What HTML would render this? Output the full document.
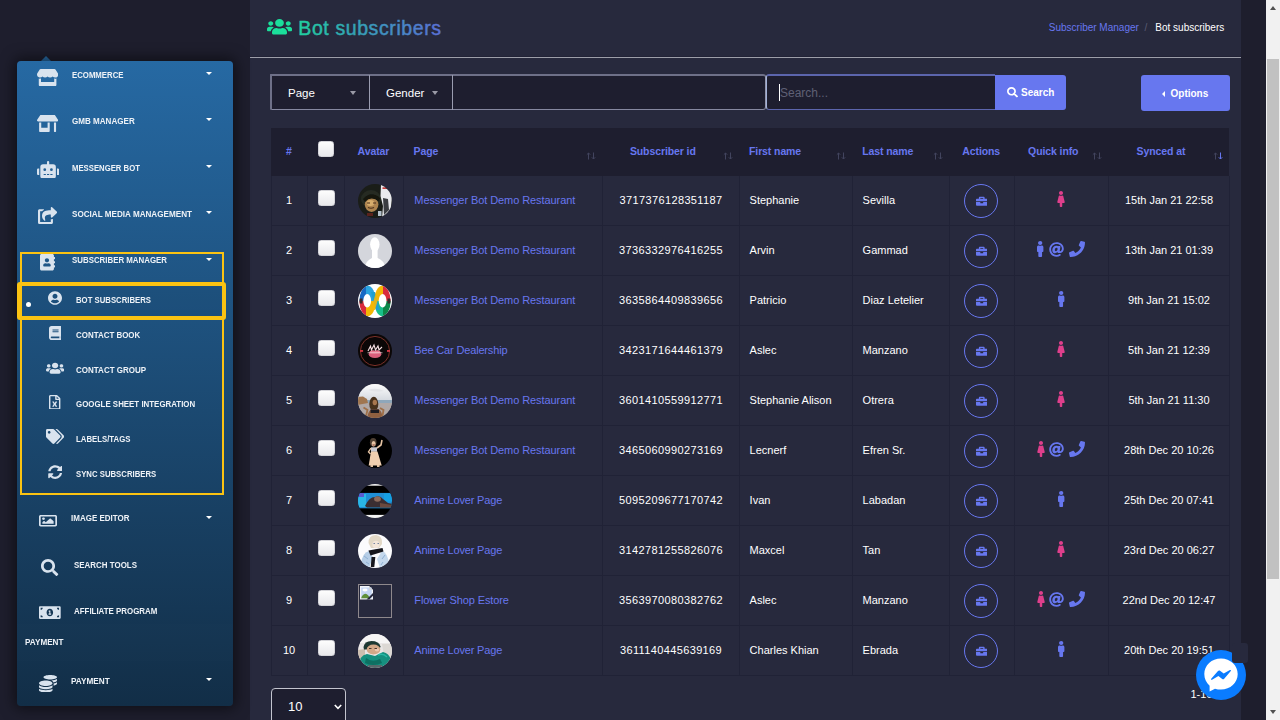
<!DOCTYPE html>
<html lang="en">
<head>
<meta charset="utf-8">
<title>Bot subscribers</title>
<style>
*{box-sizing:border-box;margin:0;padding:0}
html,body{width:1280px;height:720px;overflow:hidden;background:#1e1e2d;font-family:"Liberation Sans",sans-serif;color:#fff}
body{position:relative}
#main{position:absolute;left:250px;top:0;width:991px;height:720px;background:#27293d}
#hdrline{position:absolute;left:250px;top:56px;width:991px;height:2px;background:linear-gradient(180deg,#212236 0,#212236 50%,#9d9ea9 50%,#9d9ea9 100%)}
.crumb{position:absolute;top:21px;font-size:10px;line-height:14px;white-space:nowrap;color:#fff}
/* browser scrollbar */
#sb{position:absolute;left:1266px;top:0;width:14px;height:720px;background:#f1f1f1}
#sb .thumb{position:absolute;left:1.300px;top:59.200px;width:11.500px;height:520px;background:#c1c1c1}
#sb .up,#sb .dn{position:absolute;left:4px;width:0;height:0;border-left:3.5px solid transparent;border-right:3.5px solid transparent}
#sb .up{top:6px;border-bottom:4px solid #505050}
#sb .dn{top:710px;border-top:4px solid #505050}
/* sidebar */
#side{position:absolute;left:17px;top:61px;width:216px;height:645px;border-radius:4px;background:linear-gradient(180deg,#2669a3 0%,#122e47 100%);box-shadow:0 0 14px 3px rgba(0,0,0,.5)}
#sidetri{position:absolute;left:41px;top:56px;border-left:5px solid transparent;border-right:5px solid transparent;border-bottom:5px solid #2669a3}
.mt{position:absolute;font-size:8.7px;line-height:12px;height:12px;font-weight:700;color:#eef2f7;white-space:nowrap;transform-origin:0 50%}
.car{position:absolute;width:0;height:0;border-left:3.700px solid transparent;border-right:3.700px solid transparent;border-top:3.800px solid #fff}
.yb{position:absolute;border-style:solid;border-color:#fbc312}
/* filter bar */
.ftxt{position:absolute;font-size:11.5px;line-height:16px;color:#fff;white-space:nowrap}
.fcar{position:absolute;width:0;height:0;border-left:3px solid transparent;border-right:3px solid transparent;border-top:4px solid #9a9aa6}
.btn{position:absolute;background:#6777ef;color:#fff;font-weight:700;font-size:10px;white-space:nowrap}
/* table */
#thead{position:absolute;left:271px;top:128px;width:958px;height:48px;background:#1e1e2f}
.th{position:absolute;top:144px;height:14px;line-height:14px;font-size:10.5px;letter-spacing:-.1px;font-weight:700;color:#6777ef;white-space:nowrap}
.vl{position:absolute;top:176px;width:1px;height:500px;background:#202236}
.hl{position:absolute;left:271px;width:958px;height:1px;background:#202236}
.td{position:absolute;height:14px;line-height:14px;font-size:11px;color:#fff;white-space:nowrap}
.lnk{color:#6777ef}
.ctr{text-align:center}
.cb{position:absolute;left:318px;width:16.600px;height:16.600px;border-radius:2.800px;background:linear-gradient(180deg,#fdfdfd,#e9e9ec);border:1px solid #d5d5da}
.av{position:absolute;left:358px;width:34px;height:34px;border-radius:50%;overflow:hidden}
.ab{position:absolute;left:964px;width:34px;height:34px;border-radius:50%;border:1px solid #6777ef}
</style>
</head>
<body>
<div id="main"></div>
<div id="hdrline"></div>
<svg style="position:absolute;left:266.7px;top:18.3px" width="25" height="17.7" viewBox="0 0 640 512" preserveAspectRatio="none" fill="#1bdf9b"><path d="M96 224c35.300 0 64-28.700 64-64s-28.700-64-64-64-64 28.700-64 64 28.700 64 64 64zm448 0c35.300 0 64-28.700 64-64s-28.700-64-64-64-64 28.700-64 64 28.700 64 64 64zm32 32h-64c-17.600 0-33.500 7.100-45.100 18.600 40.300 22.100 68.900 62 75.100 109.400h66c17.700 0 32-14.300 32-32v-32c0-35.300-28.700-64-64-64zm-256 0c61.900 0 112-50.100 112-112S381.900 32 320 32 208 82.100 208 144s50.100 112 112 112zm76.800 32h-8.300c-20.800 10-43.900 16-68.500 16s-47.600-6-68.500-16h-8.300C179.600 288 128 339.600 128 403.200V432c0 26.500 21.500 48 48 48h288c26.500 0 48-21.500 48-48v-28.800c0-63.600-51.600-115.200-115.200-115.200zm-223.700-13.400C161.500 263.100 145.600 256 128 256H64c-35.300 0-64 28.700-64 64v32c0 17.700 14.300 32 32 32h65.900c6.300-47.400 34.900-87.300 75.200-109.400z"/></svg><svg style="position:absolute;left:290px;top:10px" width="170" height="36" viewBox="0 0 170 36"><defs><linearGradient id="tg" gradientUnits="userSpaceOnUse" x1="8" y1="0" x2="151" y2="0"><stop offset="0" stop-color="#20cf9f"/><stop offset=".38" stop-color="#33a3b5"/><stop offset="1" stop-color="#5a6fd6"/></linearGradient></defs><text x="8.300" y="24.700" font-family="Liberation Sans, sans-serif" font-size="19.500" letter-spacing=".6" fill="url(#tg)" stroke="url(#tg)" stroke-width=".45">Bot subscribers</text></svg>
<div class="crumb" style="left:1048.800px;color:#6777ef">Subscriber Manager</div><div class="crumb" style="left:1144.500px;color:#5a5c74">/</div><div class="crumb" style="left:1155.300px">Bot subscribers</div>
<div id="sidetri"></div><div id="side"></div>
<div style="position:absolute;left:17px;top:624px;width:216px;height:37px;background:rgba(255,255,255,.008)"></div>
<div style="position:absolute;left:21px;top:286px;width:200px;height:30px;background:rgba(0,0,0,.04)"></div>
<div class="mt" style="left:71.5px;top:69.0px;transform:scaleX(0.8965)">ECOMMERCE</div><svg style="position:absolute;left:37.2px;top:68.6px" width="21.2" height="17.2" viewBox="0 0 616 512" preserveAspectRatio="none" fill="#d9e3ee"><path d="M602 118.600L537.100 15C531.300 5.700 521 0 510 0H106C95 0 84.700 5.700 78.900 15L14 118.600c-33.500 53.500-3.800 127.900 58.800 136.400 4.500.6 9.100.9 13.700.9 29.600 0 55.800-13 73.800-33.100 18 20.100 44.300 33.100 73.800 33.100 29.600 0 55.800-13 73.800-33.100 18 20.100 44.300 33.100 73.800 33.100 29.600 0 55.800-13 73.800-33.100 18.100 20.100 44.300 33.100 73.800 33.100 4.700 0 9.200-.3 13.700-.9 62.800-8.400 92.600-82.800 59-136.400zM529.500 288c-10 0-19.900-1.500-29.500-3.800V384H116v-99.800c-9.600 2.200-19.500 3.800-29.500 3.800-6 0-12.100-.4-18-1.200-5.600-.8-11.100-2.100-16.400-3.600V480c0 17.700 14.300 32 32 32h448c17.700 0 32-14.300 32-32V283.200c-5.400 1.600-10.800 2.900-16.400 3.600-6.100.8-12.100 1.200-18.200 1.200z"/></svg><div class="car" style="left:205.600px;top:72.4px"></div>
<div class="mt" style="left:71.5px;top:115.0px;transform:scaleX(0.9281)">GMB MANAGER</div><svg style="position:absolute;left:37.2px;top:114.8px" width="21.2" height="17" viewBox="0 0 640 512" preserveAspectRatio="none" fill="#d9e3ee"><path d="M320 384H128V224H64v256c0 17.700 14.300 32 32 32h256c17.700 0 32-14.300 32-32V224h-64v160zm314.600-241.800l-85.300-128c-6-8.900-16-14.200-26.700-14.200H117.400c-10.700 0-20.700 5.300-26.600 14.200l-85.300 128c-14.200 21.300 1 49.800 26.600 49.800H608c25.500 0 40.700-28.500 26.600-49.800zM512 496c0 8.800 7.200 16 16 16h32c8.800 0 16-7.200 16-16V224h-64v272z"/></svg><div class="car" style="left:205.600px;top:118.4px"></div>
<div class="mt" style="left:71.5px;top:161.5px;transform:scaleX(0.8908)">MESSENGER BOT</div><svg style="position:absolute;left:36.7px;top:160.8px" width="22.2" height="17.3" viewBox="0 0 640 512" preserveAspectRatio="none" fill="#d9e3ee"><path d="M32,224H64V416H32A31.962,31.962,0,0,1,0,384V256A31.962,31.962,0,0,1,32,224Zm512-48V448a64.063,64.063,0,0,1-64,64H160a64.063,64.063,0,0,1-64-64V176a79.974,79.974,0,0,1,80-80H288V32a32,32,0,0,1,64,0V96H464A79.974,79.974,0,0,1,544,176ZM264,256a40,40,0,1,0-40,40A39.997,39.997,0,0,0,264,256Zm-8,128H192v32h64Zm96,0H288v32h64ZM456,256a40,40,0,1,0-40,40A39.997,39.997,0,0,0,456,256Zm-8,128H384v32h64ZM640,256V384a31.962,31.962,0,0,1-32,32H576V224h32A31.962,31.962,0,0,1,640,256Z"/></svg><div class="car" style="left:205.600px;top:164.9px"></div>
<div class="mt" style="left:71.5px;top:207.5px;transform:scaleX(0.9343)">SOCIAL MEDIA MANAGEMENT</div><svg style="position:absolute;left:37.8px;top:207.1px" width="19.2" height="17" viewBox="0 0 576 512" preserveAspectRatio="none" fill="#d9e3ee"><path d="M568.482 177.448L424.479 313.433C409.300 327.768 384 317.140 384 295.985v-71.963c-144.575.97-205.566 35.113-164.775 171.353 4.483 14.973-12.846 26.567-25.006 17.330C155.252 383.105 120 326.488 120 269.339c0-143.937 117.599-172.500 264-173.312V24.012c0-21.174 25.317-31.768 40.479-17.448l144.003 135.988c10.020 9.463 10.028 25.425 0 34.896zM384 379.128V448H64V128h50.916a11.990 11.990 0 0 0 8.648-3.693c14.953-15.568 32.237-27.890 51.014-37.676C185.708 80.830 181.584 64 169.033 64H48C21.490 64 0 85.490 0 112v352c0 26.510 21.490 48 48 48h352c26.510 0 48-21.490 48-48v-88.806c0-8.288-8.197-14.066-16.011-11.302a71.830 71.830 0 0 1-34.189 3.377c-7.270-1.046-13.800 4.514-13.800 11.859z"/></svg><div class="car" style="left:205.600px;top:210.9px"></div>
<div class="mt" style="left:71.6px;top:254.4px;transform:scaleX(0.9067)">SUBSCRIBER MANAGER</div><svg style="position:absolute;left:39.8px;top:254.4px" width="15" height="16.5" viewBox="0 0 448 512" preserveAspectRatio="none" fill="#d9e3ee"><path d="M436 160c6.600 0 12-5.400 12-12v-40c0-6.600-5.400-12-12-12h-20V48c0-26.500-21.500-48-48-48H48C21.500 0 0 21.500 0 48v416c0 26.500 21.500 48 48 48h320c26.500 0 48-21.500 48-48v-48h20c6.600 0 12-5.400 12-12v-40c0-6.600-5.400-12-12-12h-20v-64h20c6.600 0 12-5.400 12-12v-40c0-6.600-5.400-12-12-12h-20v-64h20zm-228-32c35.300 0 64 28.700 64 64s-28.700 64-64 64-64-28.700-64-64 28.700-64 64-64zm112 236.800c0 10.600-10 19.200-22.400 19.200H118.400C106 384 96 375.400 96 364.800v-19.200c0-31.800 30.100-57.600 67.200-57.600h5c12.300 5.100 25.700 8 39.800 8s27.600-2.900 39.800-8h5c37.100 0 67.200 25.800 67.200 57.600v19.200z"/></svg><div class="car" style="left:205.600px;top:257.8px"></div>
<div class="mt" style="left:75.9px;top:294.0px;transform:scaleX(0.8929)">BOT SUBSCRIBERS</div><svg style="position:absolute;left:48.1px;top:291.2px" width="14" height="14" viewBox="0 0 496 512" preserveAspectRatio="none" fill="#d9e3ee"><path d="M248 8C111 8 0 119 0 256s111 248 248 248 248-111 248-248S385 8 248 8zm0 96c48.600 0 88 39.400 88 88s-39.400 88-88 88-88-39.400-88-88 39.400-88 88-88zm0 344c-58.700 0-111.300-26.600-146.500-68.200 18.800-35.400 55.600-59.800 98.500-59.800 2.400 0 4.800.4 7.100 1.100 13 4.200 26.600 6.900 40.900 6.900 14.300 0 28-2.700 40.900-6.900 2.300-.7 4.700-1.100 7.100-1.100 42.900 0 79.700 24.400 98.500 59.800C359.300 421.400 306.700 448 248 448z"/></svg>
<div class="mt" style="left:76px;top:329.0px;transform:scaleX(0.9142)">CONTACT BOOK</div><svg style="position:absolute;left:49px;top:325.7px" width="12.2" height="14" viewBox="0 0 448 512" preserveAspectRatio="none" fill="#d9e3ee"><path d="M448 360V24c0-13.300-10.700-24-24-24H96C43 0 0 43 0 96v320c0 53 43 96 96 96h328c13.300 0 24-10.700 24-24v-16c0-7.500-3.500-14.300-8.900-18.700-4.200-15.400-4.200-59.300 0-74.700 5.400-4.300 8.900-11.100 8.900-18.600zM128 134c0-3.300 2.700-6 6-6h212c3.300 0 6 2.700 6 6v20c0 3.300-2.700 6-6 6H134c-3.300 0-6-2.700-6-6v-20zm0 64c0-3.300 2.700-6 6-6h212c3.300 0 6 2.700 6 6v20c0 3.300-2.700 6-6 6H134c-3.300 0-6-2.700-6-6v-20zm253.400 250H96c-17.700 0-32-14.300-32-32 0-17.600 14.400-32 32-32h285.400c-1.900 17.100-1.900 46.900 0 64z"/></svg>
<div class="mt" style="left:75.8px;top:363.8px;transform:scaleX(0.9223)">CONTACT GROUP</div><svg style="position:absolute;left:46px;top:361.5px" width="18.2" height="12.5" viewBox="0 0 640 512" preserveAspectRatio="none" fill="#d9e3ee"><path d="M96 224c35.300 0 64-28.700 64-64s-28.700-64-64-64-64 28.700-64 64 28.700 64 64 64zm448 0c35.300 0 64-28.700 64-64s-28.700-64-64-64-64 28.700-64 64 28.700 64 64 64zm32 32h-64c-17.600 0-33.500 7.100-45.100 18.600 40.300 22.100 68.900 62 75.100 109.400h66c17.700 0 32-14.300 32-32v-32c0-35.300-28.700-64-64-64zm-256 0c61.900 0 112-50.100 112-112S381.900 32 320 32 208 82.100 208 144s50.100 112 112 112zm76.800 32h-8.300c-20.800 10-43.900 16-68.500 16s-47.600-6-68.500-16h-8.300C179.600 288 128 339.600 128 403.200V432c0 26.500 21.500 48 48 48h288c26.500 0 48-21.500 48-48v-28.800c0-63.600-51.600-115.200-115.200-115.200zm-223.700-13.400C161.500 263.100 145.600 256 128 256H64c-35.300 0-64 28.700-64 64v32c0 17.700 14.300 32 32 32h65.900c6.300-47.400 34.900-87.300 75.200-109.400z"/></svg>
<div class="mt" style="left:75.8px;top:398.2px;transform:scaleX(0.9092)">GOOGLE SHEET INTEGRATION</div><svg style="position:absolute;left:49.2px;top:394.8px" width="11.4" height="14.6" viewBox="0 0 384 512" preserveAspectRatio="none" fill="#d9e3ee"><path d="M369.900 97.900L286 14C277 5 264.800-.1 252.100-.1H48C21.500 0 0 21.500 0 48v416c0 26.500 21.500 48 48 48h288c26.500 0 48-21.500 48-48V131.900c0-12.700-5.100-25-14.100-34zM332.100 128H256V51.900l76.100 76.100zM48 464V48h160v104c0 13.300 10.700 24 24 24h104v288H48zm212-240h-28.800c-4.400 0-8.400 2.400-10.500 6.300-18 33.100-22.200 42.400-28.600 57.700-13.900-29.100-6.900-17.300-28.600-57.700-2.100-3.900-6.200-6.300-10.600-6.300H124c-9.300 0-15 10-10.400 18l46.300 78-46.300 78c-4.700 8 1.100 18 10.400 18h28.900c4.400 0 8.400-2.400 10.500-6.300 21.700-40 23-45 28.600-57.700 14.900 30.200 5.900 15.900 28.600 57.700 2.100 3.900 6.200 6.300 10.600 6.300H260c9.300 0 15-10 10.400-18L224 320c.7-1.100 30.300-50.500 46.300-78 4.700-8-1.100-18-10.300-18z"/></svg>
<div class="mt" style="left:75.8px;top:433.0px;transform:scaleX(0.8967)">LABELS/TAGS</div><svg style="position:absolute;left:46px;top:429.2px" width="18.2" height="15" viewBox="0 0 640 512" preserveAspectRatio="none" fill="#d9e3ee"><path d="M497.941 225.941L286.059 14.059A48 48 0 0 0 252.118 0H48C21.490 0 0 21.490 0 48v204.118a48 48 0 0 0 14.059 33.941l211.882 211.882c18.744 18.745 49.136 18.746 67.882 0l204.118-204.118c18.745-18.745 18.745-49.137 0-67.882zM112 160c-26.510 0-48-21.490-48-48s21.490-48 48-48 48 21.490 48 48-21.490 48-48 48zm513.941 133.823L421.823 497.941c-18.745 18.745-49.137 18.745-67.882 0l-.36-.36L527.640 323.522c16.999-16.999 26.360-39.600 26.360-63.640s-9.362-46.641-26.360-63.640L331.397 0h48.721a48 48 0 0 1 33.941 14.059l211.882 211.882c18.745 18.745 18.745 49.137 0 67.882z"/></svg>
<div class="mt" style="left:75.8px;top:467.7px;transform:scaleX(0.8933)">SYNC SUBSCRIBERS</div><svg style="position:absolute;left:47.7px;top:464.6px" width="14.4" height="14.2" viewBox="0 0 512 512" preserveAspectRatio="none" fill="#d9e3ee"><path d="M370.720 133.280C339.458 104.008 298.888 87.962 255.848 88c-77.458.068-144.328 53.178-162.791 126.850-1.344 5.363-6.122 9.150-11.651 9.150H24.103c-7.498 0-13.194-6.807-11.807-14.176C33.933 94.924 134.813 8 256 8c66.448 0 126.791 26.136 171.315 68.685L463.030 40.970C478.149 25.851 504 36.559 504 57.941V192c0 13.255-10.745 24-24 24H345.941c-21.382 0-32.090-25.851-16.971-40.971l41.750-41.749zM32 296h134.059c21.382 0 32.090 25.851 16.971 40.971l-41.750 41.750c31.262 29.273 71.835 45.319 114.876 45.280 77.418-.07 144.315-53.144 162.787-126.849 1.344-5.363 6.122-9.150 11.651-9.150h57.304c7.498 0 13.194 6.807 11.807 14.176C478.067 417.076 377.187 504 256 504c-66.448 0-126.791-26.136-171.315-68.685L48.970 471.030C33.851 486.149 8 475.441 8 454.059V320c0-13.255 10.745-24 24-24z"/></svg>
<div class="mt" style="left:71.3px;top:512.1px;transform:scaleX(0.9205)">IMAGE EDITOR</div><svg style="position:absolute;left:38.7px;top:512.5px" width="18" height="15.5" viewBox="0 0 512 512" preserveAspectRatio="none" fill="#d9e3ee"><path d="M464 64H48C21.490 64 0 85.490 0 112v288c0 26.510 21.490 48 48 48h416c26.510 0 48-21.490 48-48V112c0-26.510-21.490-48-48-48zm-6 336H54a6 6 0 0 1-6-6V118a6 6 0 0 1 6-6h404a6 6 0 0 1 6 6v276a6 6 0 0 1-6 6zM128 152c-22.091 0-40 17.909-40 40s17.909 40 40 40 40-17.909 40-40-17.909-40-40-40zM96 352h320v-80l-87.515-87.515c-4.686-4.686-12.284-4.686-16.971 0L192 304l-39.515-39.515c-4.686-4.686-12.284-4.686-16.971 0L96 304v48z"/></svg><div class="car" style="left:205.600px;top:515.5px"></div>
<div class="mt" style="left:73.9px;top:559.0px;transform:scaleX(0.9145)">SEARCH TOOLS</div><svg style="position:absolute;left:41.3px;top:558.7px" width="17.3" height="17" viewBox="0 0 512 512" preserveAspectRatio="none" fill="#d9e3ee"><path d="M505 442.700L405.300 343c-4.500-4.500-10.600-7-17-7H372c27.600-35.300 44-79.700 44-128C416 93.100 322.900 0 208 0S0 93.100 0 208s93.100 208 208 208c48.300 0 92.700-16.400 128-44v16.300c0 6.400 2.500 12.500 7 17l99.700 99.700c9.400 9.400 24.600 9.400 33.900 0l28.300-28.300c9.400-9.400 9.400-24.600.1-34zM208 336c-70.700 0-128-57.200-128-128 0-70.700 57.200-128 128-128 70.700 0 128 57.200 128 128 0 70.700-57.200 128-128 128z"/></svg>
<div class="mt" style="left:73.9px;top:605.0px;transform:scaleX(0.9109)">AFFILIATE PROGRAM</div><svg style="position:absolute;left:39.4px;top:604.2px" width="21.7" height="17" viewBox="0 0 640 512" preserveAspectRatio="none" fill="#d9e3ee"><path d="M352 288h-16v-88c0-4.420-3.580-8-8-8h-13.580c-4.740 0-9.370 1.400-13.310 4.030l-15.330 10.220a7.994 7.994 0 0 0-2.220 11.090l8.880 13.310a7.994 7.994 0 0 0 11.090 2.220l.47-.31V288h-16c-4.420 0-8 3.580-8 8v16c0 4.420 3.580 8 8 8h64c4.420 0 8-3.580 8-8v-16c0-4.420-3.580-8-8-8zM608 64H32C14.330 64 0 78.330 0 96v320c0 17.670 14.330 32 32 32h576c17.670 0 32-14.330 32-32V96c0-17.670-14.330-32-32-32zM48 400v-64c35.350 0 64 28.650 64 64H48zm0-224v-64h64c0 35.350-28.650 64-64 64zm272 192c-53.020 0-96-50.150-96-112 0-61.860 42.980-112 96-112s96 50.140 96 112c0 61.870-43 112-96 112zm272 32h-64c0-35.350 28.650-64 64-64v64zm0-224c-35.350 0-64-28.650-64-64h64v64z"/></svg>
<div class="mt" style="left:25px;top:636.0px;transform:scaleX(0.9366)">PAYMENT</div>
<div class="mt" style="left:71.3px;top:675.0px;transform:scaleX(0.9439)">PAYMENT</div><svg style="position:absolute;left:38.7px;top:674.7px" width="18" height="17.5" viewBox="0 0 512 512" preserveAspectRatio="none" fill="#d9e3ee"><path d="M0 405.300V448c0 35.300 86 64 192 64s192-28.700 192-64v-42.700C342.700 434.400 267.200 448 192 448S41.300 434.400 0 405.300zM320 128c106 0 192-28.700 192-64S426 0 320 0 128 28.700 128 64s86 64 192 64zM0 300.400V352c0 35.300 86 64 192 64s192-28.700 192-64v-51.600c-41.300 34-116.900 51.600-192 51.600S41.300 334.400 0 300.400zm416 11c57.300-11.100 96-31.700 96-55.400v-42.700c-23.200 16.400-57.300 27.600-96 34.500v63.600zM192 160C86 160 0 195.800 0 240s86 80 192 80 192-35.800 192-80-86-80-192-80zm219.300 56.300c60-10.800 100.700-32 100.700-56.300v-42.700c-35.500 25.100-96.500 38.600-160.700 41.800 29.500 14.300 51.200 33.500 60 57.200z"/></svg><div class="car" style="left:205.600px;top:678.4px"></div>
<div style="position:absolute;left:26px;top:301.5px;width:5px;height:5px;border-radius:50%;background:#fff"></div>
<div class="yb" style="left:20px;top:252px;width:204px;height:243px;border-width:2px"></div>
<div class="yb" style="left:17px;top:282px;width:208.500px;height:38px;border-width:4px;border-radius:3px"></div>
<div style="position:absolute;left:270px;top:74px;width:496px;height:36.300px;background:#1e1e2f;border-radius:1px 3px 3px 1px;border-top:2px solid #6e7088;border-left:2px solid #6e7088;border-right:1px solid #9496ac;border-bottom:1.300px solid #8688a0"></div><div style="position:absolute;left:369px;top:75px;width:1px;height:35px;background:#9a9cb0"></div><div style="position:absolute;left:452px;top:75px;width:1px;height:35px;background:#9a9cb0"></div><div style="position:absolute;left:766px;top:74px;width:229px;height:36.300px;background:#1e1e2f;border-radius:3px 0 0 3px;border-top:2px solid #5c65ad;border-left:1px solid #a3b2d9;border-bottom:1.300px solid #5c65ad"></div>
<div class="ftxt" style="left:288px;top:85px">Page</div><div class="fcar" style="left:350px;top:91px"></div><div class="ftxt" style="left:386px;top:85px">Gender</div><div class="fcar" style="left:432px;top:91px"></div><div class="ftxt" style="left:780px;top:85px;font-size:12px;color:#5f6075">Search...</div><div style="position:absolute;left:779px;top:84px;width:1px;height:17px;background:#fff"></div>
<div class="btn" style="left:995px;top:75px;width:71px;height:35px;border-radius:0 3px 3px 0"></div><svg style="position:absolute;left:1006.6px;top:87px" width="11" height="10.5" viewBox="0 0 512 512" preserveAspectRatio="none" fill="#fff"><path d="M505 442.700L405.300 343c-4.500-4.500-10.600-7-17-7H372c27.600-35.300 44-79.700 44-128C416 93.100 322.900 0 208 0S0 93.100 0 208s93.100 208 208 208c48.300 0 92.700-16.400 128-44v16.300c0 6.400 2.500 12.500 7 17l99.700 99.700c9.400 9.400 24.600 9.400 33.900 0l28.300-28.300c9.400-9.400 9.400-24.600.1-34zM208 336c-70.700 0-128-57.200-128-128 0-70.700 57.200-128 128-128 70.700 0 128 57.200 128 128 0 70.700-57.200 128-128 128z"/></svg><div class="btn" style="left:1021px;top:86px;line-height:14px;background:none">Search</div>
<div class="btn" style="left:1141px;top:75px;width:89px;height:36px;border-radius:3px"></div><div style="position:absolute;left:1161.5px;top:90.5px;width:0;height:0;border-top:3px solid transparent;border-bottom:3px solid transparent;border-right:3.5px solid #fff"></div><div class="btn" style="left:1170.5px;top:86.5px;line-height:14px;background:none">Options</div>
<div id="thead"></div>
<div class="vl" style="left:270.5px"></div><div class="vl" style="left:307px"></div><div class="vl" style="left:344px"></div><div class="vl" style="left:403px"></div><div class="vl" style="left:602px"></div><div class="vl" style="left:739px"></div><div class="vl" style="left:852px"></div><div class="vl" style="left:948.5px"></div><div class="vl" style="left:1013.5px"></div><div class="vl" style="left:1108px"></div><div class="vl" style="left:1229px"></div>
<div class="hl" style="top:225px"></div><div class="hl" style="top:275px"></div><div class="hl" style="top:325px"></div><div class="hl" style="top:375px"></div><div class="hl" style="top:425px"></div><div class="hl" style="top:475px"></div><div class="hl" style="top:525px"></div><div class="hl" style="top:575px"></div><div class="hl" style="top:625px"></div><div class="hl" style="top:675px"></div>
<div class="th" style="left:286px">#</div><div class="th" style="left:357.6px">Avatar</div><div class="th" style="left:413.5px">Page</div><svg style="position:absolute;left:586.2px;top:152px" width="10" height="8" viewBox="0 0 10 8" fill="none" stroke-width="1"><path d="M2.500 7.500V1M.8 2.700L2.500 1l1.700 1.700" stroke="#42445e"/><path d="M7.500 .5V7M5.800 5.300L7.500 7l1.700-1.700" stroke="#42445e"/></svg><div class="th" style="left:629.9px">Subscriber id</div><svg style="position:absolute;left:723.1px;top:152px" width="10" height="8" viewBox="0 0 10 8" fill="none" stroke-width="1"><path d="M2.500 7.500V1M.8 2.700L2.500 1l1.700 1.700" stroke="#42445e"/><path d="M7.500 .5V7M5.800 5.300L7.500 7l1.700-1.700" stroke="#42445e"/></svg><div class="th" style="left:749px">First name</div><svg style="position:absolute;left:836.4px;top:152px" width="10" height="8" viewBox="0 0 10 8" fill="none" stroke-width="1"><path d="M2.500 7.500V1M.8 2.700L2.500 1l1.700 1.700" stroke="#42445e"/><path d="M7.500 .5V7M5.800 5.300L7.500 7l1.700-1.700" stroke="#42445e"/></svg><div class="th" style="left:862.3px">Last name</div><svg style="position:absolute;left:933.2px;top:152px" width="10" height="8" viewBox="0 0 10 8" fill="none" stroke-width="1"><path d="M2.500 7.500V1M.8 2.700L2.500 1l1.700 1.700" stroke="#42445e"/><path d="M7.500 .5V7M5.800 5.300L7.500 7l1.700-1.700" stroke="#42445e"/></svg><div class="th" style="left:962.3px">Actions</div><div class="th" style="left:1028.1px">Quick info</div><svg style="position:absolute;left:1092.3px;top:152px" width="10" height="8" viewBox="0 0 10 8" fill="none" stroke-width="1"><path d="M2.500 7.500V1M.8 2.700L2.500 1l1.700 1.700" stroke="#42445e"/><path d="M7.500 .5V7M5.800 5.300L7.500 7l1.700-1.700" stroke="#42445e"/></svg><div class="th" style="left:1136.6px">Synced at</div><svg style="position:absolute;left:1213px;top:152px" width="10" height="8" viewBox="0 0 10 8" fill="none" stroke-width="1"><path d="M2.500 7.500V1M.8 2.700L2.500 1l1.700 1.700" stroke="#42445e"/><path d="M7.500 .5V7M5.800 5.300L7.500 7l1.700-1.700" stroke="#6777ef"/></svg>
<div class="cb" style="top:140.600px;left:317.500px"></div>
<div class="td ctr" style="left:271px;width:36px;top:193.0px">1</div><div class="cb" style="top:189.9px"></div><div class="av" style="top:183.5px"><svg width="34" height="34" viewBox="0 0 34 34"><defs><filter id="bl1" x="-10%" y="-10%" width="120%" height="120%"><feGaussianBlur stdDeviation=".55"/></filter></defs><rect width="34" height="34" fill="#1a1d18"/><g filter="url(#bl1)"><ellipse cx="13" cy="15" rx="10" ry="9" fill="#252b22"/><path d="M23 0l8 2 3 10-1 13-4 6-5 3 1-12-2.500-10z" fill="#e9eaee"/><path d="M25 14l5 1 1 11-5 5z" fill="#3a3d42"/><rect x="24.500" y="3.300" width="4.500" height="1.700" fill="#c43c3c"/><ellipse cx="13.600" cy="20.600" rx="6.800" ry="7.300" fill="#ad8450"/><ellipse cx="12.500" cy="19" rx="3.800" ry="3" fill="#d6ad6c"/><path d="M5 15Q13 6 22 14l-1 3.500Q13 11.500 7 18z" fill="#13160e"/><path d="M9 19h3M15 19h3M10 23.500q3 1.500 6 0" stroke="#4a2f1a" stroke-width="1.200" fill="none"/><rect x="9" y="29" width="6" height="3" fill="#5a201c"/><rect x="20" y="27" width="3.500" height="5" fill="#b4c0cc"/></g></svg></div><div class="td lnk" style="left:414.3px;top:193.0px;letter-spacing:-0.080px">Messenger Bot Demo Restaurant</div><div class="td ctr" style="left:603px;width:136px;top:193.0px;letter-spacing:0.370px">3717376128351187</div><div class="td" style="left:749.6px;top:193.0px;letter-spacing:0.000px">Stephanie</div><div class="td" style="left:862.6px;top:193.0px;letter-spacing:0.000px">Sevilla</div><div class="ab" style="top:183.5px"></div><svg style="position:absolute;left:975.5px;top:195.5px" width="11.5" height="10.5" viewBox="0 0 512 512" preserveAspectRatio="none" fill="#6777ef"><path d="M320 336c0 8.840-7.160 16-16 16h-96c-8.840 0-16-7.160-16-16v-48H0v144c0 25.600 22.400 48 48 48h416c25.600 0 48-22.400 48-48V288H320v48zm144-208h-80V80c0-25.600-22.400-48-48-48H176c-25.600 0-48 22.400-48 48v48H48c-25.600 0-48 22.400-48 48v80h512v-80c0-25.600-22.400-48-48-48zm-144 0H192V96h128v32z"/></svg><svg style="position:absolute;left:1057px;top:191.0px" width="8" height="16" viewBox="0 0 256 512" preserveAspectRatio="none" fill="#df3f8c"><path d="M128 0c35.346 0 64 28.654 64 64s-28.654 64-64 64c-35.346 0-64-28.654-64-64S92.654 0 128 0m119.283 354.179l-48-192A24 24 0 0 0 176 144h-11.360c-22.711 10.443-49.590 10.894-73.280 0H80a24 24 0 0 0-23.283 18.179l-48 192C4.935 369.305 16.383 384 32 384h56v104c0 13.255 10.745 24 24 24h32c13.255 0 24-10.745 24-24V384h56c15.591 0 27.071-14.671 23.283-29.821z"/></svg><div class="td ctr" style="left:1109px;width:120px;top:193.0px;letter-spacing:0.000px">15th Jan 21 22:58</div>
<div class="td ctr" style="left:271px;width:36px;top:243.0px">2</div><div class="cb" style="top:239.9px"></div><div class="av" style="top:233.5px"><svg width="34" height="34" viewBox="0 0 34 34"><rect width="34" height="34" fill="#d4d6dc"/><ellipse cx="16.800" cy="10.500" rx="4.700" ry="7.200" fill="#fff"/><rect x="14" y="14" width="5.600" height="12" fill="#fff"/><path d="M6.500 34Q8.500 26 14 24h5.600q6 2 8 10z" fill="#fff"/></svg></div><div class="td lnk" style="left:414.3px;top:243.0px;letter-spacing:-0.080px">Messenger Bot Demo Restaurant</div><div class="td ctr" style="left:603px;width:136px;top:243.0px;letter-spacing:0.370px">3736332976416255</div><div class="td" style="left:749.6px;top:243.0px;letter-spacing:0.000px">Arvin</div><div class="td" style="left:862.6px;top:243.0px;letter-spacing:0.000px">Gammad</div><div class="ab" style="top:233.5px"></div><svg style="position:absolute;left:975.5px;top:245.5px" width="11.5" height="10.5" viewBox="0 0 512 512" preserveAspectRatio="none" fill="#6777ef"><path d="M320 336c0 8.840-7.160 16-16 16h-96c-8.840 0-16-7.160-16-16v-48H0v144c0 25.600 22.400 48 48 48h416c25.600 0 48-22.400 48-48V288H320v48zm144-208h-80V80c0-25.600-22.400-48-48-48H176c-25.600 0-48 22.400-48 48v48H48c-25.600 0-48 22.400-48 48v80h512v-80c0-25.600-22.400-48-48-48zm-144 0H192V96h128v32z"/></svg><svg style="position:absolute;left:1037.3px;top:241.0px" width="6.4" height="16" viewBox="0 0 192 512" preserveAspectRatio="none" fill="#6777ef"><path d="M96 0c35.346 0 64 28.654 64 64s-28.654 64-64 64-64-28.654-64-64S60.654 0 96 0m48 144h-11.360c-22.711 10.443-49.590 10.894-73.280 0H48c-26.510 0-48 21.490-48 48v136c0 13.255 10.745 24 24 24h16v136c0 13.255 10.745 24 24 24h64c13.255 0 24-10.745 24-24V352h16c13.255 0 24-10.745 24-24V192c0-26.510-21.490-48-48-48z"/></svg><svg style="position:absolute;left:1049px;top:241.7px" width="15" height="15" viewBox="0 0 512 512" preserveAspectRatio="none" fill="#6777ef"><path d="M256 8C118.941 8 8 118.919 8 256c0 137.059 110.919 248 248 248 48.154 0 95.342-14.140 135.408-40.223 12.005-7.815 14.625-24.288 5.552-35.372l-10.177-12.433c-7.671-9.371-21.179-11.667-31.373-5.129C325.920 429.757 291.314 440 256 440c-101.458 0-184-82.542-184-184S154.542 72 256 72c100.139 0 184 57.619 184 160 0 38.786-21.093 79.742-58.170 83.693-17.349-.454-16.910-12.857-13.476-30.024l23.433-121.110C394.653 149.750 383.308 136 368.225 136h-44.981a13.518 13.518 0 0 0-13.432 11.993l-.10.092c-14.697-17.901-40.448-21.775-59.971-21.775-74.580 0-137.831 62.234-137.831 151.460 0 65.303 36.785 105.870 96 105.870 26.984 0 57.369-15.637 74.991-38.333 9.522 34.104 40.613 34.103 70.710 34.103C462.609 379.410 504 307.798 504 232 504 95.653 394.023 8 256 8zm-21.680 304.430c-22.249 0-36.070-15.623-36.070-40.771 0-44.993 30.779-72.729 58.630-72.729 22.292 0 35.601 15.241 35.601 40.770 0 45.061-33.875 72.730-58.161 72.730z"/></svg><svg style="position:absolute;left:1069.4px;top:241.3px" width="16" height="16" viewBox="0 0 512 512" preserveAspectRatio="none" fill="#6777ef"><path d="M493.400 24.600l-104-24c-11.300-2.600-22.900 3.300-27.500 13.900l-48 112c-4.200 9.800-1.400 21.300 6.900 28l60.600 49.600c-36 76.700-98.900 140.500-177.200 177.200l-49.600-60.600c-6.800-8.300-18.200-11.100-28-6.900l-112 48C3.900 366.500-2 378.100.6 389.400l24 104C27.100 504.200 36.700 512 48 512c256.100 0 464-207.500 464-464 0-11.200-7.700-20.900-18.600-23.400z"/></svg><div class="td ctr" style="left:1109px;width:120px;top:243.0px;letter-spacing:0.000px">13th Jan 21 01:39</div>
<div class="td ctr" style="left:271px;width:36px;top:293.0px">3</div><div class="cb" style="top:289.9px"></div><div class="av" style="top:283.5px"><svg width="34" height="34" viewBox="0 0 34 34"><defs><clipPath id="c3a"><ellipse cx="9.600" cy="17" rx="8.200" ry="15.200"/></clipPath><clipPath id="c3b"><ellipse cx="24.400" cy="17" rx="8.200" ry="15.200"/></clipPath></defs><rect width="34" height="34" fill="#fff"/><g clip-path="url(#c3a)"><rect x="0" y="0" width="8" height="17" fill="#1769c4"/><rect x="8" y="0" width="10" height="17" fill="#2aa4de"/><rect x="0" y="17" width="8" height="17" fill="#d92b3c"/><rect x="8" y="17" width="10" height="17" fill="#f3b705"/><rect x="1" y="14.500" width="3.500" height="5" fill="#3a2c2c"/></g><g clip-path="url(#c3b)"><rect x="16" y="0" width="9" height="17" fill="#f3b705"/><rect x="25" y="0" width="9" height="17" fill="#d92b3c"/><rect x="25" y="17" width="9" height="17" fill="#0c8748"/><rect x="16" y="17" width="9" height="17" fill="#18c08a"/><rect x="29.500" y="14.500" width="3.500" height="5" fill="#3a2c2c"/></g><path d="M13 8l4 0 5 18-4 0z" fill="#1f9fd0"/><path d="M13 26l4 0 5-18-4 0z" fill="#f3b705" opacity=".9"/><ellipse cx="9.200" cy="16.800" rx="3.900" ry="6.800" fill="#fff"/><ellipse cx="24.600" cy="16.800" rx="3.900" ry="6.800" fill="#fff"/></svg></div><div class="td lnk" style="left:414.3px;top:293.0px;letter-spacing:-0.080px">Messenger Bot Demo Restaurant</div><div class="td ctr" style="left:603px;width:136px;top:293.0px;letter-spacing:0.370px">3635864409839656</div><div class="td" style="left:749.6px;top:293.0px;letter-spacing:0.000px">Patricio</div><div class="td" style="left:862.6px;top:293.0px;letter-spacing:0.000px">Diaz Letelier</div><div class="ab" style="top:283.5px"></div><svg style="position:absolute;left:975.5px;top:295.5px" width="11.5" height="10.5" viewBox="0 0 512 512" preserveAspectRatio="none" fill="#6777ef"><path d="M320 336c0 8.840-7.160 16-16 16h-96c-8.840 0-16-7.160-16-16v-48H0v144c0 25.600 22.400 48 48 48h416c25.600 0 48-22.400 48-48V288H320v48zm144-208h-80V80c0-25.600-22.400-48-48-48H176c-25.600 0-48 22.400-48 48v48H48c-25.600 0-48 22.400-48 48v80h512v-80c0-25.600-22.400-48-48-48zm-144 0H192V96h128v32z"/></svg><svg style="position:absolute;left:1058.3px;top:291.0px" width="6.4" height="16" viewBox="0 0 192 512" preserveAspectRatio="none" fill="#6777ef"><path d="M96 0c35.346 0 64 28.654 64 64s-28.654 64-64 64-64-28.654-64-64S60.654 0 96 0m48 144h-11.360c-22.711 10.443-49.590 10.894-73.280 0H48c-26.510 0-48 21.490-48 48v136c0 13.255 10.745 24 24 24h16v136c0 13.255 10.745 24 24 24h64c13.255 0 24-10.745 24-24V352h16c13.255 0 24-10.745 24-24V192c0-26.510-21.490-48-48-48z"/></svg><div class="td ctr" style="left:1109px;width:120px;top:293.0px;letter-spacing:0.000px">9th Jan 21 15:02</div>
<div class="td ctr" style="left:271px;width:36px;top:343.0px">4</div><div class="cb" style="top:339.9px"></div><div class="av" style="top:333.5px"><svg width="34" height="34" viewBox="0 0 34 34"><rect width="34" height="34" fill="#0b0707"/><circle cx="17" cy="17" r="14.600" fill="none" stroke="#7a3028" stroke-width="1"/><ellipse cx="17" cy="20.300" rx="6.300" ry="3.700" fill="#d95f7b"/><path d="M10.700 18.500q3-3.500 6.300-1.500 3.300-2 6.300 1.500-6.300 2-12.600 0z" fill="#e8788f"/><path d="M10 17l2.500-5 1 4 2.500-5 1.500 5 2.500-4 1 4 3-3" stroke="#f4dfe2" stroke-width="1.100" fill="none"/><path d="M9.500 18.800h15" stroke="#f4e6e8" stroke-width=".7"/><rect x="2.200" y="16.100" width="2.900" height="1.700" fill="#e23a4a"/><rect x="29" y="16.100" width="2.900" height="1.700" fill="#e23a4a"/></svg></div><div class="td lnk" style="left:414.3px;top:343.0px;letter-spacing:-0.160px">Bee Car Dealership</div><div class="td ctr" style="left:603px;width:136px;top:343.0px;letter-spacing:0.370px">3423171644461379</div><div class="td" style="left:749.6px;top:343.0px;letter-spacing:0.000px">Aslec</div><div class="td" style="left:862.6px;top:343.0px;letter-spacing:0.000px">Manzano</div><div class="ab" style="top:333.5px"></div><svg style="position:absolute;left:975.5px;top:345.5px" width="11.5" height="10.5" viewBox="0 0 512 512" preserveAspectRatio="none" fill="#6777ef"><path d="M320 336c0 8.840-7.160 16-16 16h-96c-8.840 0-16-7.160-16-16v-48H0v144c0 25.600 22.400 48 48 48h416c25.600 0 48-22.400 48-48V288H320v48zm144-208h-80V80c0-25.600-22.400-48-48-48H176c-25.600 0-48 22.400-48 48v48H48c-25.600 0-48 22.400-48 48v80h512v-80c0-25.600-22.400-48-48-48zm-144 0H192V96h128v32z"/></svg><svg style="position:absolute;left:1057px;top:341.0px" width="8" height="16" viewBox="0 0 256 512" preserveAspectRatio="none" fill="#df3f8c"><path d="M128 0c35.346 0 64 28.654 64 64s-28.654 64-64 64c-35.346 0-64-28.654-64-64S92.654 0 128 0m119.283 354.179l-48-192A24 24 0 0 0 176 144h-11.360c-22.711 10.443-49.590 10.894-73.280 0H80a24 24 0 0 0-23.283 18.179l-48 192C4.935 369.305 16.383 384 32 384h56v104c0 13.255 10.745 24 24 24h32c13.255 0 24-10.745 24-24V384h56c15.591 0 27.071-14.671 23.283-29.821z"/></svg><div class="td ctr" style="left:1109px;width:120px;top:343.0px;letter-spacing:0.000px">5th Jan 21 12:39</div>
<div class="td ctr" style="left:271px;width:36px;top:393.0px">5</div><div class="cb" style="top:389.9px"></div><div class="av" style="top:383.5px"><svg width="34" height="34" viewBox="0 0 34 34"><defs><linearGradient id="sky5" x1="0" y1="0" x2="0" y2="1"><stop offset="0" stop-color="#fdfdfd"/><stop offset="1" stop-color="#d3d8df"/></linearGradient><filter id="bl5" x="-10%" y="-10%" width="120%" height="120%"><feGaussianBlur stdDeviation=".5"/></filter></defs><rect width="34" height="34" fill="#b0a8a6"/><rect width="34" height="17" fill="url(#sky5)"/><g filter="url(#bl5)"><path d="M10 6q8-3 16 1-8 2-16-1z" fill="#e2e4e8"/><rect x="-1" y="16" width="36" height="3" fill="#8fa7ba"/><rect x="-1" y="19" width="36" height="16" fill="#b0a8a6"/><path d="M-1 13l6-.5 4 2.500 1 4-11 2z" fill="#a07650"/><ellipse cx="15.800" cy="20" rx="4.500" ry="7.200" fill="#46301f"/><path d="M9 35q1-9 5-10h6q4 1 5 10z" fill="#8f6040"/><ellipse cx="16.800" cy="18.500" rx="2.200" ry="2.800" fill="#a87850"/><rect x="12.500" y="25.500" width="8.500" height="3.500" fill="#1f1c20"/><path d="M5.500 23.500l4 2.500-1.500 6M22 24l3.500 2-1 6" stroke="#a07048" stroke-width="1.800" fill="none"/></g></svg></div><div class="td lnk" style="left:414.3px;top:393.0px;letter-spacing:-0.080px">Messenger Bot Demo Restaurant</div><div class="td ctr" style="left:603px;width:136px;top:393.0px;letter-spacing:0.370px">3601410559912771</div><div class="td" style="left:749.6px;top:393.0px;letter-spacing:0.000px">Stephanie Alison</div><div class="td" style="left:862.6px;top:393.0px;letter-spacing:0.000px">Otrera</div><div class="ab" style="top:383.5px"></div><svg style="position:absolute;left:975.5px;top:395.5px" width="11.5" height="10.5" viewBox="0 0 512 512" preserveAspectRatio="none" fill="#6777ef"><path d="M320 336c0 8.840-7.160 16-16 16h-96c-8.840 0-16-7.160-16-16v-48H0v144c0 25.600 22.400 48 48 48h416c25.600 0 48-22.400 48-48V288H320v48zm144-208h-80V80c0-25.600-22.400-48-48-48H176c-25.600 0-48 22.400-48 48v48H48c-25.600 0-48 22.400-48 48v80h512v-80c0-25.600-22.400-48-48-48zm-144 0H192V96h128v32z"/></svg><svg style="position:absolute;left:1057px;top:391.0px" width="8" height="16" viewBox="0 0 256 512" preserveAspectRatio="none" fill="#df3f8c"><path d="M128 0c35.346 0 64 28.654 64 64s-28.654 64-64 64c-35.346 0-64-28.654-64-64S92.654 0 128 0m119.283 354.179l-48-192A24 24 0 0 0 176 144h-11.360c-22.711 10.443-49.590 10.894-73.280 0H80a24 24 0 0 0-23.283 18.179l-48 192C4.935 369.305 16.383 384 32 384h56v104c0 13.255 10.745 24 24 24h32c13.255 0 24-10.745 24-24V384h56c15.591 0 27.071-14.671 23.283-29.821z"/></svg><div class="td ctr" style="left:1109px;width:120px;top:393.0px;letter-spacing:0.000px">5th Jan 21 11:30</div>
<div class="td ctr" style="left:271px;width:36px;top:443.0px">6</div><div class="cb" style="top:439.9px"></div><div class="av" style="top:433.5px"><svg width="34" height="34" viewBox="0 0 34 34"><defs><filter id="bl6" x="-10%" y="-10%" width="120%" height="120%"><feGaussianBlur stdDeviation=".35"/></filter></defs><rect width="34" height="34" fill="#000"/><g filter="url(#bl6)"><ellipse cx="15.200" cy="8.300" rx="3.300" ry="4.200" fill="#4f4033"/><ellipse cx="15.600" cy="9.700" rx="2" ry="2.700" fill="#e6c4a4"/><path d="M14.500 11h2.300" stroke="#7a2a20" stroke-width=".9"/><rect x="13" y="13.300" width="6" height="4.500" fill="#c9cad2"/><path d="M13 17.600h6.500l4.200 14h-13z" fill="#f0cfb0"/><path d="M19 14l4-3 1-5" stroke="#e6c4a4" stroke-width="1.600" fill="none"/><path d="M13 14l-2.500 4 2 2" stroke="#e6c4a4" stroke-width="1.400" fill="none"/><rect x="12.500" y="31" width="2.500" height="2" fill="#e6c4a4"/><rect x="19" y="31" width="2.500" height="2" fill="#e6c4a4"/></g></svg></div><div class="td lnk" style="left:414.3px;top:443.0px;letter-spacing:-0.080px">Messenger Bot Demo Restaurant</div><div class="td ctr" style="left:603px;width:136px;top:443.0px;letter-spacing:0.370px">3465060990273169</div><div class="td" style="left:749.6px;top:443.0px;letter-spacing:0.000px">Lecnerf</div><div class="td" style="left:862.6px;top:443.0px;letter-spacing:0.000px">Efren Sr.</div><div class="ab" style="top:433.5px"></div><svg style="position:absolute;left:975.5px;top:445.5px" width="11.5" height="10.5" viewBox="0 0 512 512" preserveAspectRatio="none" fill="#6777ef"><path d="M320 336c0 8.840-7.160 16-16 16h-96c-8.840 0-16-7.160-16-16v-48H0v144c0 25.600 22.400 48 48 48h416c25.600 0 48-22.400 48-48V288H320v48zm144-208h-80V80c0-25.600-22.400-48-48-48H176c-25.600 0-48 22.400-48 48v48H48c-25.600 0-48 22.400-48 48v80h512v-80c0-25.600-22.400-48-48-48zm-144 0H192V96h128v32z"/></svg><svg style="position:absolute;left:1036.6px;top:441.0px" width="8" height="16" viewBox="0 0 256 512" preserveAspectRatio="none" fill="#df3f8c"><path d="M128 0c35.346 0 64 28.654 64 64s-28.654 64-64 64c-35.346 0-64-28.654-64-64S92.654 0 128 0m119.283 354.179l-48-192A24 24 0 0 0 176 144h-11.360c-22.711 10.443-49.590 10.894-73.280 0H80a24 24 0 0 0-23.283 18.179l-48 192C4.935 369.305 16.383 384 32 384h56v104c0 13.255 10.745 24 24 24h32c13.255 0 24-10.745 24-24V384h56c15.591 0 27.071-14.671 23.283-29.821z"/></svg><svg style="position:absolute;left:1049px;top:441.7px" width="15" height="15" viewBox="0 0 512 512" preserveAspectRatio="none" fill="#6777ef"><path d="M256 8C118.941 8 8 118.919 8 256c0 137.059 110.919 248 248 248 48.154 0 95.342-14.140 135.408-40.223 12.005-7.815 14.625-24.288 5.552-35.372l-10.177-12.433c-7.671-9.371-21.179-11.667-31.373-5.129C325.920 429.757 291.314 440 256 440c-101.458 0-184-82.542-184-184S154.542 72 256 72c100.139 0 184 57.619 184 160 0 38.786-21.093 79.742-58.170 83.693-17.349-.454-16.910-12.857-13.476-30.024l23.433-121.110C394.653 149.750 383.308 136 368.225 136h-44.981a13.518 13.518 0 0 0-13.432 11.993l-.10.092c-14.697-17.901-40.448-21.775-59.971-21.775-74.580 0-137.831 62.234-137.831 151.460 0 65.303 36.785 105.870 96 105.870 26.984 0 57.369-15.637 74.991-38.333 9.522 34.104 40.613 34.103 70.710 34.103C462.609 379.410 504 307.798 504 232 504 95.653 394.023 8 256 8zm-21.680 304.430c-22.249 0-36.070-15.623-36.070-40.771 0-44.993 30.779-72.729 58.630-72.729 22.292 0 35.601 15.241 35.601 40.770 0 45.061-33.875 72.730-58.161 72.730z"/></svg><svg style="position:absolute;left:1069.4px;top:441.3px" width="16" height="16" viewBox="0 0 512 512" preserveAspectRatio="none" fill="#6777ef"><path d="M493.400 24.600l-104-24c-11.300-2.600-22.900 3.300-27.500 13.900l-48 112c-4.200 9.800-1.400 21.300 6.900 28l60.600 49.600c-36 76.700-98.900 140.500-177.200 177.200l-49.600-60.600c-6.800-8.300-18.200-11.100-28-6.900l-112 48C3.900 366.500-2 378.100.6 389.400l24 104C27.100 504.200 36.700 512 48 512c256.100 0 464-207.500 464-464 0-11.200-7.700-20.900-18.600-23.400z"/></svg><div class="td ctr" style="left:1109px;width:120px;top:443.0px;letter-spacing:0.000px">28th Dec 20 10:26</div>
<div class="td ctr" style="left:271px;width:36px;top:493.0px">7</div><div class="cb" style="top:489.9px"></div><div class="av" style="top:483.5px"><svg width="34" height="34" viewBox="0 0 34 34"><defs><filter id="bl7" x="-10%" y="-10%" width="120%" height="120%"><feGaussianBlur stdDeviation=".5"/></filter></defs><rect width="34" height="34" fill="#000"/><rect width="34" height="1.700" fill="#f4f4f4"/><rect y="30.900" width="34" height="3.100" fill="#f4f4f4"/><rect y="8.600" width="34" height="16" fill="#1f8fd6"/><g filter="url(#bl7)"><rect x="-1" y="10" width="9" height="13" fill="#2ab6e6"/><rect x="0" y="9" width="6" height="4" fill="#5a5ad0"/><rect x="26" y="9.500" width="9" height="8" fill="#18a0e2"/><path d="M7 22q4-9 10-9 5-2 8 2l5 4 5 1v3.500H9z" fill="#3b2f30"/><ellipse cx="19.500" cy="15" rx="3.400" ry="2.800" fill="#8c6b5c"/><path d="M22 19l12 2v2.500H22z" fill="#6a4a3c"/></g><rect y="8" width="34" height=".8" fill="#000"/><rect y="24.500" width="34" height=".8" fill="#000"/></svg></div><div class="td lnk" style="left:414.3px;top:493.0px;letter-spacing:-0.170px">Anime Lover Page</div><div class="td ctr" style="left:603px;width:136px;top:493.0px;letter-spacing:0.370px">5095209677170742</div><div class="td" style="left:749.6px;top:493.0px;letter-spacing:0.000px">Ivan</div><div class="td" style="left:862.6px;top:493.0px;letter-spacing:0.000px">Labadan</div><div class="ab" style="top:483.5px"></div><svg style="position:absolute;left:975.5px;top:495.5px" width="11.5" height="10.5" viewBox="0 0 512 512" preserveAspectRatio="none" fill="#6777ef"><path d="M320 336c0 8.840-7.160 16-16 16h-96c-8.840 0-16-7.160-16-16v-48H0v144c0 25.600 22.400 48 48 48h416c25.600 0 48-22.400 48-48V288H320v48zm144-208h-80V80c0-25.600-22.400-48-48-48H176c-25.600 0-48 22.400-48 48v48H48c-25.600 0-48 22.400-48 48v80h512v-80c0-25.600-22.400-48-48-48zm-144 0H192V96h128v32z"/></svg><svg style="position:absolute;left:1058.3px;top:491.0px" width="6.4" height="16" viewBox="0 0 192 512" preserveAspectRatio="none" fill="#6777ef"><path d="M96 0c35.346 0 64 28.654 64 64s-28.654 64-64 64-64-28.654-64-64S60.654 0 96 0m48 144h-11.360c-22.711 10.443-49.590 10.894-73.280 0H48c-26.510 0-48 21.490-48 48v136c0 13.255 10.745 24 24 24h16v136c0 13.255 10.745 24 24 24h64c13.255 0 24-10.745 24-24V352h16c13.255 0 24-10.745 24-24V192c0-26.510-21.490-48-48-48z"/></svg><div class="td ctr" style="left:1109px;width:120px;top:493.0px;letter-spacing:0.000px">25th Dec 20 07:41</div>
<div class="td ctr" style="left:271px;width:36px;top:543.0px">8</div><div class="cb" style="top:539.9px"></div><div class="av" style="top:533.5px"><svg width="34" height="34" viewBox="0 0 34 34"><defs><filter id="bl8" x="-10%" y="-10%" width="120%" height="120%"><feGaussianBlur stdDeviation=".45"/></filter></defs><rect width="34" height="34" fill="#fbfbfd"/><g filter="url(#bl8)"><path d="M10.500 9q0-8 7.500-8 7 1 6 9l-3 4h-8z" fill="#e2d8c6"/><ellipse cx="18" cy="10.500" rx="3.600" ry="3.800" fill="#f3e6da"/><path d="M15.500 9.500h1.500M19.500 9.500H21" stroke="#6a7a9a" stroke-width=".9"/><path d="M3 30q1-11 8-13l4 6-4 11H5z" fill="#b5cde6"/><path d="M31 30q-1-11-7-13l-5 8 3 9h8z" fill="#c3d7ec"/><path d="M10.500 16.500l14-2.500 1 3.500-13 4z" fill="#15151d"/><path d="M13.500 23h3.800l-1 10h-3.500z" fill="#15151d"/><path d="M6 22l4 3M27 21l-3 4M8 28l3 2M25 28l-2 3" stroke="#8fb0d4" stroke-width="1" fill="none"/></g></svg></div><div class="td lnk" style="left:414.3px;top:543.0px;letter-spacing:-0.170px">Anime Lover Page</div><div class="td ctr" style="left:603px;width:136px;top:543.0px;letter-spacing:0.370px">3142781255826076</div><div class="td" style="left:749.6px;top:543.0px;letter-spacing:0.000px">Maxcel</div><div class="td" style="left:862.6px;top:543.0px;letter-spacing:0.000px">Tan</div><div class="ab" style="top:533.5px"></div><svg style="position:absolute;left:975.5px;top:545.5px" width="11.5" height="10.5" viewBox="0 0 512 512" preserveAspectRatio="none" fill="#6777ef"><path d="M320 336c0 8.840-7.160 16-16 16h-96c-8.840 0-16-7.160-16-16v-48H0v144c0 25.600 22.400 48 48 48h416c25.600 0 48-22.400 48-48V288H320v48zm144-208h-80V80c0-25.600-22.400-48-48-48H176c-25.600 0-48 22.400-48 48v48H48c-25.600 0-48 22.400-48 48v80h512v-80c0-25.600-22.400-48-48-48zm-144 0H192V96h128v32z"/></svg><svg style="position:absolute;left:1057px;top:541.0px" width="8" height="16" viewBox="0 0 256 512" preserveAspectRatio="none" fill="#df3f8c"><path d="M128 0c35.346 0 64 28.654 64 64s-28.654 64-64 64c-35.346 0-64-28.654-64-64S92.654 0 128 0m119.283 354.179l-48-192A24 24 0 0 0 176 144h-11.360c-22.711 10.443-49.590 10.894-73.280 0H80a24 24 0 0 0-23.283 18.179l-48 192C4.935 369.305 16.383 384 32 384h56v104c0 13.255 10.745 24 24 24h32c13.255 0 24-10.745 24-24V384h56c15.591 0 27.071-14.671 23.283-29.821z"/></svg><div class="td ctr" style="left:1109px;width:120px;top:543.0px;letter-spacing:0.000px">23rd Dec 20 06:27</div>
<div class="td ctr" style="left:271px;width:36px;top:593.0px">9</div><div class="cb" style="top:589.9px"></div><div style="position:absolute;left:358px;top:583.5px;width:34px;height:34px"><svg width="34" height="34" viewBox="0 0 34 34"><rect x=".5" y=".5" width="33" height="33" fill="none" stroke="#8e888c" stroke-width="1"/><path d="M2 2h9l4 4v9.500H2z" fill="#f2f4f8"/><rect x="3.200" y="3.500" width="10.500" height="10.800" fill="#c4d5f4"/><path d="M3.200 14.300q.8-4 4.300-4.500 3 .5 4.200 4.500z" fill="#5f8f3a"/><ellipse cx="7" cy="6" rx="2.600" ry="1.400" fill="#fff"/><path d="M11 2l4 4h-4z" fill="#cfd3da"/><path d="M15.500 8.500L8.500 15.500h2.800l4.200-4.200z" fill="#27293d"/></svg></div><div class="td lnk" style="left:414.3px;top:593.0px;letter-spacing:-0.120px">Flower Shop Estore</div><div class="td ctr" style="left:603px;width:136px;top:593.0px;letter-spacing:0.370px">3563970080382762</div><div class="td" style="left:749.6px;top:593.0px;letter-spacing:0.000px">Aslec</div><div class="td" style="left:862.6px;top:593.0px;letter-spacing:0.000px">Manzano</div><div class="ab" style="top:583.5px"></div><svg style="position:absolute;left:975.5px;top:595.5px" width="11.5" height="10.5" viewBox="0 0 512 512" preserveAspectRatio="none" fill="#6777ef"><path d="M320 336c0 8.840-7.160 16-16 16h-96c-8.840 0-16-7.160-16-16v-48H0v144c0 25.600 22.400 48 48 48h416c25.600 0 48-22.400 48-48V288H320v48zm144-208h-80V80c0-25.600-22.400-48-48-48H176c-25.600 0-48 22.400-48 48v48H48c-25.600 0-48 22.400-48 48v80h512v-80c0-25.600-22.400-48-48-48zm-144 0H192V96h128v32z"/></svg><svg style="position:absolute;left:1036.6px;top:591.0px" width="8" height="16" viewBox="0 0 256 512" preserveAspectRatio="none" fill="#df3f8c"><path d="M128 0c35.346 0 64 28.654 64 64s-28.654 64-64 64c-35.346 0-64-28.654-64-64S92.654 0 128 0m119.283 354.179l-48-192A24 24 0 0 0 176 144h-11.360c-22.711 10.443-49.590 10.894-73.280 0H80a24 24 0 0 0-23.283 18.179l-48 192C4.935 369.305 16.383 384 32 384h56v104c0 13.255 10.745 24 24 24h32c13.255 0 24-10.745 24-24V384h56c15.591 0 27.071-14.671 23.283-29.821z"/></svg><svg style="position:absolute;left:1049px;top:591.7px" width="15" height="15" viewBox="0 0 512 512" preserveAspectRatio="none" fill="#6777ef"><path d="M256 8C118.941 8 8 118.919 8 256c0 137.059 110.919 248 248 248 48.154 0 95.342-14.140 135.408-40.223 12.005-7.815 14.625-24.288 5.552-35.372l-10.177-12.433c-7.671-9.371-21.179-11.667-31.373-5.129C325.920 429.757 291.314 440 256 440c-101.458 0-184-82.542-184-184S154.542 72 256 72c100.139 0 184 57.619 184 160 0 38.786-21.093 79.742-58.170 83.693-17.349-.454-16.910-12.857-13.476-30.024l23.433-121.110C394.653 149.750 383.308 136 368.225 136h-44.981a13.518 13.518 0 0 0-13.432 11.993l-.10.092c-14.697-17.901-40.448-21.775-59.971-21.775-74.580 0-137.831 62.234-137.831 151.460 0 65.303 36.785 105.870 96 105.870 26.984 0 57.369-15.637 74.991-38.333 9.522 34.104 40.613 34.103 70.710 34.103C462.609 379.410 504 307.798 504 232 504 95.653 394.023 8 256 8zm-21.680 304.430c-22.249 0-36.070-15.623-36.070-40.771 0-44.993 30.779-72.729 58.630-72.729 22.292 0 35.601 15.241 35.601 40.770 0 45.061-33.875 72.730-58.161 72.730z"/></svg><svg style="position:absolute;left:1069.4px;top:591.3px" width="16" height="16" viewBox="0 0 512 512" preserveAspectRatio="none" fill="#6777ef"><path d="M493.400 24.600l-104-24c-11.300-2.600-22.900 3.300-27.500 13.900l-48 112c-4.200 9.800-1.400 21.300 6.900 28l60.600 49.600c-36 76.700-98.900 140.500-177.200 177.200l-49.600-60.600c-6.800-8.300-18.200-11.100-28-6.900l-112 48C3.900 366.500-2 378.100.6 389.400l24 104C27.100 504.200 36.700 512 48 512c256.100 0 464-207.500 464-464 0-11.200-7.700-20.900-18.600-23.400z"/></svg><div class="td ctr" style="left:1109px;width:120px;top:593.0px;letter-spacing:0.000px">22nd Dec 20 12:47</div>
<div class="td ctr" style="left:271px;width:36px;top:643.0px">10</div><div class="cb" style="top:639.9px"></div><div class="av" style="top:633.5px"><svg width="34" height="34" viewBox="0 0 34 34"><defs><filter id="bl10" x="-10%" y="-10%" width="120%" height="120%"><feGaussianBlur stdDeviation=".5"/></filter></defs><rect width="34" height="34" fill="#e9e6e6"/><g filter="url(#bl10)"><rect x="-1" y="-1" width="36" height="10" fill="#f6f5f5"/><path d="M-1 16l8-1v12l-8 2z" fill="#cdbfb0"/><path d="M24 10h11v14l-9-2z" fill="#dcd8d4"/><path d="M5.500 13q1-6 8-6 7.500 0 9 5.500l-1 3H6z" fill="#1f3833"/><ellipse cx="15.500" cy="15.500" rx="6.800" ry="5" fill="#d3a888"/><ellipse cx="19" cy="15.800" rx="2.200" ry="1.600" fill="#efc8b0"/><path d="M11 14.500h2.500M16.500 14.500H19" stroke="#3a2a22" stroke-width=".9"/><path d="M1 33q0-12 8-13l8 2 8-4q6 1 8 8l-2 9H3z" fill="#13907f"/><path d="M8 24q6 5 14 1l2 4q-9 4-17 0z" fill="#0b6f62"/><path d="M20 21q5-2 9 2" stroke="#2ab8a6" stroke-width="1.500" fill="none"/><path d="M10 31h14v4H10z" fill="#57686a"/></g></svg></div><div class="td lnk" style="left:414.3px;top:643.0px;letter-spacing:-0.170px">Anime Lover Page</div><div class="td ctr" style="left:603px;width:136px;top:643.0px;letter-spacing:0.370px">3611140445639169</div><div class="td" style="left:749.6px;top:643.0px;letter-spacing:0.000px">Charles Khian</div><div class="td" style="left:862.6px;top:643.0px;letter-spacing:0.000px">Ebrada</div><div class="ab" style="top:633.5px"></div><svg style="position:absolute;left:975.5px;top:645.5px" width="11.5" height="10.5" viewBox="0 0 512 512" preserveAspectRatio="none" fill="#6777ef"><path d="M320 336c0 8.840-7.160 16-16 16h-96c-8.840 0-16-7.160-16-16v-48H0v144c0 25.600 22.400 48 48 48h416c25.600 0 48-22.400 48-48V288H320v48zm144-208h-80V80c0-25.600-22.400-48-48-48H176c-25.600 0-48 22.400-48 48v48H48c-25.600 0-48 22.400-48 48v80h512v-80c0-25.600-22.400-48-48-48zm-144 0H192V96h128v32z"/></svg><svg style="position:absolute;left:1058.3px;top:641.0px" width="6.4" height="16" viewBox="0 0 192 512" preserveAspectRatio="none" fill="#6777ef"><path d="M96 0c35.346 0 64 28.654 64 64s-28.654 64-64 64-64-28.654-64-64S60.654 0 96 0m48 144h-11.360c-22.711 10.443-49.590 10.894-73.280 0H48c-26.510 0-48 21.490-48 48v136c0 13.255 10.745 24 24 24h16v136c0 13.255 10.745 24 24 24h64c13.255 0 24-10.745 24-24V352h16c13.255 0 24-10.745 24-24V192c0-26.510-21.490-48-48-48z"/></svg><div class="td ctr" style="left:1109px;width:120px;top:643.0px;letter-spacing:0.000px">20th Dec 20 19:51</div>
<div style="position:absolute;left:271px;top:688px;width:75px;height:40px;border:1px solid #c3c4ce;border-radius:4px;background:#1e1e2f"></div><div style="position:absolute;left:288px;top:699px;font-size:13px;line-height:16px">10</div><svg style="position:absolute;left:334px;top:703.5px" width="8" height="6" viewBox="0 0 8 6" fill="none" stroke="#fff" stroke-width="1.6"><path d="M.8 1l3.200 3.300L7.200 1"/></svg>
<div class="td" style="left:1190.500px;top:686.500px">1-10/68</div>
<svg style="position:absolute;left:1196px;top:650px" width="50" height="50" viewBox="0 0 50 50"><circle cx="25" cy="25" r="25" fill="#0a7cff"/><path fill="#fff" d="M25 8.500c-9.400 0-16.700 6.800-16.700 15.600 0 4.700 2 8.800 5.300 11.600v5.900l5.400-2.900c1.900.6 3.900.9 6 .9 9.400 0 16.700-6.800 16.700-15.500S34.400 8.500 25 8.500z"/><path fill="#0a7cff" d="M15.200 28.800l6.800-7.900c.5-.6 1.400-.7 2 -.2l3.700 2.900 6.200-3.500c.7-.4 1.400.4.900 1l-6.600 7.700c-.5.600-1.400.7-2 .2l-3.800-2.900-6.300 3.700c-.7.400-1.400-.4-.9-1z"/></svg>
<div style="position:absolute;left:1231.500px;top:643px;width:16.500px;height:19.500px;border-radius:3px;background:#27293d"></div>
<div id="sb"><div class="up"></div><div class="thumb"></div><div class="dn"></div></div>
</body>
</html>
